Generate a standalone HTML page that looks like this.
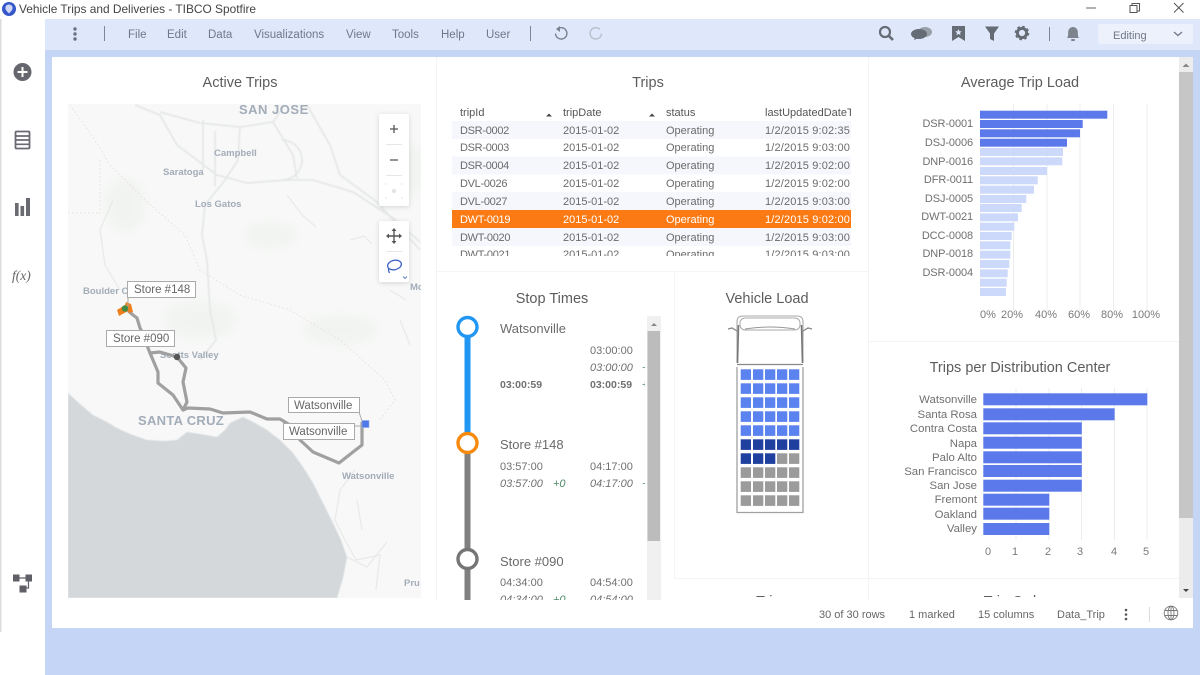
<!DOCTYPE html>
<html><head><meta charset="utf-8"><title>Vehicle Trips and Deliveries</title>
<style>
html,body{margin:0;padding:0;width:1200px;height:675px;overflow:hidden;background:#fff}
svg{display:block;filter:blur(.35px)}
text{font-family:"Liberation Sans",sans-serif;fill:#6b6b6b;font-size:11px}
.tb{font-size:11.5px;fill:#6f7888}
.ti{font-size:14.5px;fill:#5c5c5c;text-anchor:middle}
.h{fill:#555}
.lu{letter-spacing:.15px}
.lb{text-anchor:end;font-size:11px;letter-spacing:-.1px;fill:#707070}
.lc{text-anchor:end;font-size:11.4px;fill:#707070}
.tk{text-anchor:middle;font-size:11px;fill:#7a7a7a}
.ml{font-size:11.5px;fill:#666}
.mp{font-weight:bold;fill:#a3acb9;font-size:9.5px}
.st{font-size:11px;fill:#707070}
.it{font-style:italic}
.g{fill:#4f8a68;font-style:italic}
.w{fill:#fff}
</style></head><body>
<svg width="1200" height="675" viewBox="0 0 1200 675" xmlns="http://www.w3.org/2000/svg">
<defs>
<clipPath id="cm"><rect x="68" y="104" width="353" height="494"/></clipPath>
<clipPath id="ct"><rect x="452" y="104" width="399" height="152"/></clipPath>
<clipPath id="cs"><rect x="445" y="312" width="200" height="288"/></clipPath>
<clipPath id="cb"><rect x="680" y="580" width="490" height="17"/></clipPath>
<filter id="b1"><feGaussianBlur stdDeviation="0.45"/></filter>
<filter id="b3" x="-50%" y="-50%" width="200%" height="200%"><feGaussianBlur stdDeviation="5"/></filter>
<filter id="sh" x="-30%" y="-30%" width="160%" height="160%"><feDropShadow dx="0" dy="1" stdDeviation="2.5" flood-color="#000" flood-opacity=".14"/></filter>
</defs>

<!-- base -->
<rect width="1200" height="19" fill="#fff"/>
<rect x="45" y="19" width="1155" height="656" fill="#c5d5f6"/>
<rect x="45" y="19" width="1155" height="31" fill="#dfe8fb"/>
<rect x="0" y="19" width="45" height="656" fill="#fff"/>
<rect x="0" y="19" width="1.5" height="613" fill="#dcdcdc"/>
<rect x="52" y="57" width="1141" height="571" fill="#fff" rx="1"/>

<!-- title bar -->
<circle cx="9" cy="9" r="7" fill="#3557c9"/>
<path d="M9 4.5c-2.2 0-3.600 1.600-3.600 3.500 0 2.300 2.300 4 3.600 5.500 1.300-1.500 3.600-3.200 3.600-5.500 0-1.900-1.400-3.500-3.600-3.500z" fill="#cfd6f6"/>
<text x="19" y="13" style="font-size:11.9px;fill:#444">Vehicle Trips and Deliveries - TIBCO Spotfire</text>
<path d="M1086 8h10" stroke="#666" stroke-width="1"/>
<rect x="1130" y="5.500" width="7" height="7" fill="#fff" stroke="#555"/>
<path d="M1132 5.500v-2h7.500v7.500h-2.500" fill="none" stroke="#555"/>
<path d="M1174 3l9.500 9.500M1183.500 3l-9.500 9.500" stroke="#555" stroke-width="1"/>

<!-- toolbar -->
<circle cx="75" cy="29" r="1.700" fill="#6a7280"/><circle cx="75" cy="34" r="1.700" fill="#6a7280"/><circle cx="75" cy="39" r="1.700" fill="#6a7280"/>
<path d="M104.500 26v15M530.500 26v15M1049.500 27v14" stroke="#7d8694" stroke-width="1"/>
<text class="tb" x="128" y="38">File</text>
<text class="tb" x="167" y="38">Edit</text>
<text class="tb" x="208" y="38">Data</text>
<text class="tb" x="254" y="38">Visualizations</text>
<text class="tb" x="346" y="38">View</text>
<text class="tb" x="392" y="38">Tools</text>
<text class="tb" x="441" y="38">Help</text>
<text class="tb" x="486" y="38">User</text>
<path d="M557 29.500a5.700 5.700 0 1 1-1.500 4" fill="none" stroke="#7a828e" stroke-width="1.400"/><path d="M560 26v6l-4-3z" fill="#7a828e"/>
<path d="M602 29.500a5.700 5.700 0 1 0 1.500 4" fill="none" stroke="#b8bfca" stroke-width="1.400" transform="translate(-2 0)"/>
<circle cx="885" cy="32" r="5" fill="none" stroke="#666c75" stroke-width="2.200"/><path d="M889 36l4 4" stroke="#666c75" stroke-width="2.600"/>
<ellipse cx="925" cy="32" rx="7" ry="5" fill="#9aa0aa"/><ellipse cx="919" cy="34" rx="8" ry="5" fill="#666c75"/><path d="M915 37l-1 3 5-2z" fill="#666c75"/>
<path d="M952 26h13v15l-6.500-4-6.500 4z" fill="#666c75"/><path d="M958.500 29l1 2.200 2.300.2-1.800 1.500.6 2.300-2.100-1.300-2.100 1.300.6-2.300-1.800-1.500 2.300-.2z" fill="#dfe8fb"/>
<path d="M985 26.500h14l-5 7v7.500l-4-2v-5.500z" fill="#666c75"/>
<circle cx="1022" cy="33" r="4.600" fill="none" stroke="#666c75" stroke-width="3"/><circle cx="1022" cy="33" r="6.300" fill="none" stroke="#666c75" stroke-width="2" stroke-dasharray="2.500 2.450"/>
<path d="M1067 38c1.500-2 1-4 1.200-6.500.2-2.500 2.300-4.500 4.800-4.500s4.600 2 4.800 4.500c.2 2.500-.3 4.500 1.200 6.500z" fill="#7d848e"/><rect x="1071" y="39" width="4" height="2" rx="1" fill="#7d848e"/>
<rect x="1098" y="24" width="95" height="20" rx="2" fill="#ecf1fc"/>
<text class="tb" x="1113" y="39" style="font-size:11px">Editing</text>
<path d="M1174 32l4 3.500 4-3.500" fill="none" stroke="#6f7888" stroke-width="1.300"/>

<!-- sidebar -->
<circle cx="22.500" cy="72" r="9" fill="#66666e"/><path d="M22.500 67v10M17.500 72h10" stroke="#fff" stroke-width="2"/>
<rect x="15.500" y="131.500" width="14" height="17" rx="1" fill="none" stroke="#6a6a72" stroke-width="1.800"/>
<path d="M15.500 136h14M15.500 140h14M15.500 144.300h14" stroke="#6a6a72" stroke-width="1.700"/>
<rect x="15" y="203" width="3.600" height="13" fill="#6a6a72"/><rect x="20.500" y="206" width="3.600" height="10" fill="#6a6a72"/><rect x="26" y="198" width="4" height="18" fill="#6a6a72"/>
<text x="12" y="280" style="font-family:'Liberation Serif',serif;font-style:italic;font-size:13.500px;fill:#666">f(x)</text>
<rect x="13" y="574.500" width="6.500" height="7" fill="#5f5f68"/><rect x="25.500" y="574.500" width="6.500" height="7" fill="#5f5f68"/><rect x="19.500" y="585.500" width="7" height="7" fill="#5f5f68"/>
<path d="M19.500 578h6M28.500 581.500v6.500h-2" fill="none" stroke="#5f5f68" stroke-width="1.200"/>

<!-- panel dividers -->
<path d="M436.500 57v543M868.500 57v543M436 271.500h432M674.500 272v306M674 578.500h505M868 341.500h311" stroke="#f4f4f4" stroke-width="1"/>

<!-- titles -->
<text class="ti" x="240" y="87">Active Trips</text>
<text class="ti" x="648" y="87">Trips</text>
<text class="ti" x="1020" y="87">Average Trip Load</text>
<text class="ti" x="552" y="303">Stop Times</text>
<text class="ti" x="767" y="303">Vehicle Load</text>
<text class="ti" x="1020" y="372">Trips per Distribution Center</text>
<g clip-path="url(#cb)"><text class="ti" x="1020" y="606">Trip Orders</text><text class="ti" x="772" y="606">Trips</text></g>

<!-- map -->
<g clip-path="url(#cm)">
<rect x="68" y="104" width="353" height="494" fill="#f7f8f7"/>
<g filter="url(#b3)" fill="#eff2ef" opacity=".75">
<ellipse cx="125" cy="205" rx="20" ry="26"/>
<ellipse cx="270" cy="235" rx="26" ry="12"/><ellipse cx="340" cy="330" rx="36" ry="14"/>
<ellipse cx="200" cy="320" rx="36" ry="18"/>
<ellipse cx="410" cy="170" rx="14" ry="26"/>
</g>
<path d="M68 393L80 404 93 415 105 421 117 428 130 434 147 440 165 441 177 440 187 432 200 434 217 437 225 430 230 423 243 417 255 423 267 430 280 440 293 453 303 467 313 483 323 503 333 523 341 540 347 557 343 578 337 598H68z" fill="#d4d8db" filter="url(#b1)"/>
<g fill="none" stroke="#e6e8e8" stroke-width="1.800" filter="url(#b1)">
<path d="M135 105L160 115 177 145 217 175 247 183 287 180 313 180 353 192 393 218 420 242"/>
<path d="M160 112L200 123 240 127 273 122 285 105"/>
<path d="M273 122L293 155 297 178"/>
<path d="M307 105L330 145 340 175 377 202 420 250"/>
<path d="M240 127L238 160 225 180 205 205 202 235 207 260 210 310 216 340 200 360"/>
<path d="M215 131v55M203 120v50M282 140a20 20 0 1 1 0 40"/>
</g>
<g fill="none" stroke="#e8e9e8" stroke-width="1.200">
<path d="M113 200L100 230 105 265 120 290M287 195l15 20 14 12M350 240l14-4 8 8M390 290l16 10M400 320l10 25"/>
<path d="M355 470L340 490 335 520 345 540 356 560 380 555 376 590M357 500l5 30M347 557l20 10 20-25"/>
</g>
<g fill="none" stroke="#ecdfdc" stroke-width="1" stroke-dasharray="1.500 2.500">
<path d="M70 105L95 140 110 165 145 200 185 235 200 270 240 295 290 310 340 340 385 380 395 400 380 420M68 213h32M100 160v55"/>
</g>
<text class="mp" x="239" y="114" style="font-size:13px;letter-spacing:.5px">SAN JOSE</text>
<text class="mp" x="214" y="156">Campbell</text>
<text class="mp" x="163" y="175">Saratoga</text>
<text class="mp" x="195" y="207">Los Gatos</text>
<text class="mp" x="83" y="294">Boulder C</text>
<text class="mp" x="160" y="358">Scotts Valley</text>
<text class="mp" x="138" y="425" style="font-size:13px;letter-spacing:.3px">SANTA CRUZ</text>
<text class="mp" x="342" y="479">Watsonville</text>
<text class="mp" x="404" y="586">Pru</text>
<text class="mp" x="410" y="290">Mo</text>
<g fill="none" stroke="#a0a0a0" stroke-width="3.200" stroke-linejoin="round" stroke-linecap="round">
<path d="M125 308L133 315 137 318 140 328 145 338 148 348 150 353 158 372 158 383 173 395 183 410 188 408 210 409 223 413 250 412 267 419 280 419 290 425 300 440 313 452 339 463 353 452 362 445 362 423"/>
<path d="M150 353L160 352 177 357 186 368 183 382 187 402 183 410"/>
</g>
<rect x="362" y="420.500" width="7" height="7" fill="#4f78e8" stroke="#8ea9ee" stroke-width=".6"/>
<circle cx="177" cy="357" r="3.200" fill="#555"/>
<path d="M117 310l8-5 1-3 5 2 2 8-4 1-1-2-9 5z" fill="#ee7f1e"/><circle cx="125" cy="308.500" r="3.200" fill="#3f8a46"/>
<g fill="#fff" stroke="#aaa" stroke-width="1">
<rect x="127.500" y="281.500" width="68" height="16"/>
<rect x="106.500" y="330.500" width="68" height="16"/>
<rect x="288.500" y="397.500" width="71" height="15"/>
<rect x="283.500" y="423.500" width="71" height="16"/>
</g>
<path d="M128 297v10M359 412l3 9M355 426h7" stroke="#aaa" fill="none"/>
<text class="ml" x="134" y="293">Store #148</text>
<text class="ml" x="113" y="342">Store #090</text>
<text class="ml" x="294" y="409">Watsonville</text>
<text class="ml" x="289" y="435">Watsonville</text>
<rect x="379" y="114" width="30" height="92" rx="2" fill="#fff" filter="url(#sh)"/>
<rect x="379" y="221" width="30" height="61" rx="2" fill="#fff" filter="url(#sh)"/>
<path d="M390 129h8M394 125v8M390 160h8" stroke="#555" stroke-width="1.300"/>
<path d="M386 144.500h16M386 175.500h16M386 251.500h16" stroke="#e6e6e6"/>
<circle cx="394" cy="191" r="2.200" fill="#e4e4e4"/>
<g fill="#eee"><circle cx="386" cy="184" r="1"/><circle cx="402" cy="184" r="1"/><circle cx="386" cy="198" r="1"/><circle cx="402" cy="198" r="1"/></g>
<path d="M394 229v14M387 236h14" stroke="#555" stroke-width="1.400"/>
<path d="M394 228l-2.500 3h5zM394 244l-2.500-3h5zM386 236l3-2.500v5zM402 236l-3-2.500v5z" fill="#555"/>
<ellipse cx="394.500" cy="265" rx="7" ry="4.700" transform="rotate(-12 394.500 265)" fill="none" stroke="#3f63c9" stroke-width="1.300"/>
<path d="M389 268c-1 1.500-.5 3 .5 5" fill="none" stroke="#3f63c9" stroke-width="1.300"/>
<path d="M403 276.500l2 2 2-2" fill="none" stroke="#5a76c4" stroke-width=".9"/>
</g>

<!-- table -->
<g clip-path="url(#ct)">
<rect x="452" y="121" width="399" height="18" fill="#f5f7fc"/>
<rect x="452" y="156.500" width="399" height="18" fill="#f5f7fc"/>
<rect x="452" y="192" width="399" height="18" fill="#f5f7fc"/>
<rect x="452" y="228" width="399" height="18" fill="#f5f7fc"/>
<rect x="452" y="210" width="399" height="18" fill="#fb7a14"/>
<text class="h" x="460" y="116">tripId</text><text class="h" x="563" y="116">tripDate</text><text class="h" x="666" y="116">status</text><text class="h" x="765" y="116">lastUpdatedDateTime</text>
<path d="M546 116.500l3-3 3 3zM649 116.500l3-3 3 3z" fill="#444"/>
<g style="letter-spacing:-.3px">
<text x="460" y="134">DSR-0002</text><text x="460" y="151">DSR-0003</text><text x="460" y="169">DSR-0004</text><text x="460" y="187">DVL-0026</text><text x="460" y="205">DVL-0027</text><text class="w" x="460" y="223">DWT-0019</text><text x="460" y="241">DWT-0020</text><text x="460" y="258">DWT-0021</text>
</g>
<text x="563" y="134">2015-01-02</text><text x="563" y="151">2015-01-02</text><text x="563" y="169">2015-01-02</text><text x="563" y="187">2015-01-02</text><text x="563" y="205">2015-01-02</text><text class="w" x="563" y="223">2015-01-02</text><text x="563" y="241">2015-01-02</text><text x="563" y="258">2015-01-02</text>
<text x="666" y="134">Operating</text><text x="666" y="151">Operating</text><text x="666" y="169">Operating</text><text x="666" y="187">Operating</text><text x="666" y="205">Operating</text><text class="w" x="666" y="223">Operating</text><text x="666" y="241">Operating</text><text x="666" y="258">Operating</text>
<g class="lu"><text class="lu" x="765" y="134">1/2/2015 9:02:35 AM</text><text class="lu" x="765" y="151">1/2/2015 9:03:00 AM</text><text class="lu" x="765" y="169">1/2/2015 9:02:00 AM</text><text class="lu" x="765" y="187">1/2/2015 9:02:00 AM</text><text class="lu" x="765" y="205">1/2/2015 9:03:00 AM</text><text class="w lu" x="765" y="223">1/2/2015 9:02:00 AM</text><text class="lu" x="765" y="241">1/2/2015 9:03:00 AM</text><text class="lu" x="765" y="258">1/2/2015 9:03:00 AM</text></g>
</g>

<!-- stop times -->
<g clip-path="url(#cs)">
<rect x="464.500" y="335" width="6" height="100" fill="#2196f3"/>
<rect x="464.500" y="452" width="6" height="150" fill="#808080"/>
<circle cx="467.500" cy="327" r="9.500" fill="#fff" stroke="#2196f3" stroke-width="3.400"/>
<circle cx="467.500" cy="443" r="9.500" fill="#fff" stroke="#f58a0f" stroke-width="3.400"/>
<circle cx="467.500" cy="559" r="9.500" fill="#fff" stroke="#757575" stroke-width="3.400"/>
<text x="500" y="333" style="font-size:13px;fill:#6a6a6a">Watsonville</text>
<text class="st" x="590" y="354">03:00:00</text>
<text class="st it" x="590" y="371">03:00:00</text><text class="g" x="642" y="371">+0</text>
<text class="st" x="500" y="388" style="font-weight:bold;font-size:10.500px">03:00:59</text>
<text class="st" x="590" y="388" style="font-weight:bold;font-size:10.500px">03:00:59</text><text class="g" x="642" y="388" style="font-style:normal">+0</text>
<text x="500" y="449" style="font-size:13px;fill:#6a6a6a">Store #148</text>
<text class="st" x="500" y="470">03:57:00</text><text class="st" x="590" y="470">04:17:00</text>
<text class="st it" x="500" y="487">03:57:00</text><text class="g" x="553" y="487">+0</text><text class="st it" x="590" y="487">04:17:00</text><text class="g" x="642" y="487">+0</text>
<text x="500" y="566" style="font-size:13px;fill:#6a6a6a">Store #090</text>
<text class="st" x="500" y="586">04:34:00</text><text class="st" x="590" y="586">04:54:00</text>
<text class="st it" x="500" y="603">04:34:00</text><text class="g" x="553" y="603">+0</text><text class="st it" x="590" y="603">04:54:00</text>
</g>
<rect x="647" y="316" width="14" height="284" fill="#f0f0f0"/>
<rect x="647.500" y="331" width="12.500" height="210" fill="#bcbcbc"/>
<path d="M651 326l3-3 3 3z" fill="#888"/>

<!-- vehicle load -->
<g fill="none" stroke="#8a8a8a">
<path d="M737 363V322q0-6 6-6h54q6 0 6 6v41" stroke-width="1.100" stroke="#aaa"/>
<path d="M737.500 363l1-38M802.500 363l-1-38" stroke-width="1.600" stroke="#777"/>
<rect x="740" y="318" width="60" height="12" rx="5" stroke-width="1" stroke="#aaa"/>
<path d="M745 329q25-4 50 0" stroke-width="1" stroke="#999"/>
<path d="M737 331l-5-3-4 1M803 331l5-3 4 1" stroke-width="1.300" stroke="#888"/>
<path d="M737 364.500h66" stroke-width="1.300" stroke="#888"/>
<path d="M737 367v145.500h66V367" stroke-width="1.300" stroke="#a0a0a0"/>
</g>
<g fill="#5b83f0">
<rect x="740.700" y="369.300" width="10.300" height="10.600"/><rect x="753" y="369.300" width="10.300" height="10.600"/><rect x="765" y="369.300" width="10.300" height="10.600"/><rect x="777" y="369.300" width="10.300" height="10.600"/><rect x="789" y="369.300" width="10.300" height="10.600"/>
<rect x="740.700" y="383.300" width="10.300" height="10.600"/><rect x="753" y="383.300" width="10.300" height="10.600"/><rect x="765" y="383.300" width="10.300" height="10.600"/><rect x="777" y="383.300" width="10.300" height="10.600"/><rect x="789" y="383.300" width="10.300" height="10.600"/>
<rect x="740.700" y="397.300" width="10.300" height="10.600"/><rect x="753" y="397.300" width="10.300" height="10.600"/><rect x="765" y="397.300" width="10.300" height="10.600"/><rect x="777" y="397.300" width="10.300" height="10.600"/><rect x="789" y="397.300" width="10.300" height="10.600"/>
<rect x="740.700" y="411.300" width="10.300" height="10.600"/><rect x="753" y="411.300" width="10.300" height="10.600"/><rect x="765" y="411.300" width="10.300" height="10.600"/><rect x="777" y="411.300" width="10.300" height="10.600"/><rect x="789" y="411.300" width="10.300" height="10.600"/>
<rect x="740.700" y="425.300" width="10.300" height="10.600"/><rect x="753" y="425.300" width="10.300" height="10.600"/><rect x="765" y="425.300" width="10.300" height="10.600"/><rect x="777" y="425.300" width="10.300" height="10.600"/><rect x="789" y="425.300" width="10.300" height="10.600"/>
</g>
<g fill="#20409f">
<rect x="740.700" y="439.300" width="10.300" height="10.600"/><rect x="753" y="439.300" width="10.300" height="10.600"/><rect x="765" y="439.300" width="10.300" height="10.600"/><rect x="777" y="439.300" width="10.300" height="10.600"/><rect x="789" y="439.300" width="10.300" height="10.600"/>
<rect x="740.700" y="453.300" width="10.300" height="10.600"/><rect x="753" y="453.300" width="10.300" height="10.600"/><rect x="765" y="453.300" width="10.300" height="10.600"/>
</g>
<g fill="#9b9b9b">
<rect x="777" y="453.300" width="10.300" height="10.600"/><rect x="789" y="453.300" width="10.300" height="10.600"/>
<rect x="740.700" y="467.300" width="10.300" height="10.600"/><rect x="753" y="467.300" width="10.300" height="10.600"/><rect x="765" y="467.300" width="10.300" height="10.600"/><rect x="777" y="467.300" width="10.300" height="10.600"/><rect x="789" y="467.300" width="10.300" height="10.600"/>
<rect x="740.700" y="481.300" width="10.300" height="10.600"/><rect x="753" y="481.300" width="10.300" height="10.600"/><rect x="765" y="481.300" width="10.300" height="10.600"/><rect x="777" y="481.300" width="10.300" height="10.600"/><rect x="789" y="481.300" width="10.300" height="10.600"/>
<rect x="740.700" y="495.300" width="10.300" height="10.600"/><rect x="753" y="495.300" width="10.300" height="10.600"/><rect x="765" y="495.300" width="10.300" height="10.600"/><rect x="777" y="495.300" width="10.300" height="10.600"/><rect x="789" y="495.300" width="10.300" height="10.600"/>
</g>

<!-- average trip load chart -->
<path d="M1013.500 104v206M1047 104v206M1080 104v206M1113.500 104v206M1147 104v206" stroke="#ececec"/>
<g fill="#5b79ea">
<rect x="980" y="110.700" width="127.300" height="8"/><rect x="980" y="120" width="102.700" height="8"/><rect x="980" y="129.300" width="100" height="8"/><rect x="980" y="138.700" width="87" height="8"/>
</g>
<g fill="#cdd9fb">
<rect x="980" y="148" width="83" height="8"/><rect x="980" y="157.300" width="82.300" height="8"/><rect x="980" y="167" width="67" height="8"/><rect x="980" y="176.300" width="57.700" height="8"/><rect x="980" y="185.700" width="54" height="8"/><rect x="980" y="195" width="46.300" height="8"/><rect x="980" y="204" width="41.700" height="8"/><rect x="980" y="213.300" width="38" height="8"/><rect x="980" y="222.700" width="34.300" height="8"/><rect x="980" y="232" width="31.700" height="8"/><rect x="980" y="241.300" width="30.300" height="8"/><rect x="980" y="250.700" width="30.300" height="8"/><rect x="980" y="260" width="29.300" height="8"/><rect x="980" y="269.300" width="27.700" height="8"/><rect x="980" y="278.700" width="26.700" height="8"/><rect x="980" y="288" width="26" height="8"/>
</g>
<text class="lb" x="973" y="127">DSR-0001</text>
<text class="lb" x="973" y="146">DSJ-0006</text>
<text class="lb" x="973" y="165">DNP-0016</text>
<text class="lb" x="973" y="183">DFR-0011</text>
<text class="lb" x="973" y="202">DSJ-0005</text>
<text class="lb" x="973" y="220">DWT-0021</text>
<text class="lb" x="973" y="239">DCC-0008</text>
<text class="lb" x="973" y="257">DNP-0018</text>
<text class="lb" x="973" y="276">DSR-0004</text>
<text class="tk" x="988" y="318">0%</text><text class="tk" x="1012" y="318">20%</text><text class="tk" x="1046" y="318">40%</text><text class="tk" x="1079" y="318">60%</text><text class="tk" x="1112" y="318">80%</text><text class="tk" x="1146" y="318">100%</text>

<!-- distribution chart -->
<path d="M1016 388v152M1049 388v152M1081.500 388v152M1114.500 388v152M1147 388v152" stroke="#ececec"/>
<g fill="#5b79ea">
<rect x="983.300" y="393.300" width="164" height="12"/><rect x="983.300" y="408.300" width="131.300" height="12"/><rect x="983.300" y="422.300" width="98.500" height="12"/><rect x="983.300" y="436.700" width="98.500" height="12"/><rect x="983.300" y="451.300" width="98.500" height="12"/><rect x="983.300" y="465" width="98.500" height="12"/><rect x="983.300" y="479.700" width="98.500" height="12"/><rect x="983.300" y="493.700" width="66" height="12"/><rect x="983.300" y="507.700" width="66" height="12"/><rect x="983.300" y="523" width="66" height="12"/>
</g>
<text class="lc" x="977" y="403">Watsonville</text>
<text class="lc" x="977" y="418">Santa Rosa</text>
<text class="lc" x="977" y="432">Contra Costa</text>
<text class="lc" x="977" y="447">Napa</text>
<text class="lc" x="977" y="461">Palo Alto</text>
<text class="lc" x="977" y="475">San Francisco</text>
<text class="lc" x="977" y="489">San Jose</text>
<text class="lc" x="977" y="503">Fremont</text>
<text class="lc" x="977" y="518">Oakland</text>
<text class="lc" x="977" y="532">Valley</text>
<text class="tk" x="988" y="555">0</text><text class="tk" x="1015" y="555">1</text><text class="tk" x="1048" y="555">2</text><text class="tk" x="1080" y="555">3</text><text class="tk" x="1114" y="555">4</text><text class="tk" x="1146" y="555">5</text>

<!-- right scrollbar -->
<rect x="1179" y="57" width="14" height="541" fill="#ececec"/>
<rect x="1179" y="72" width="14" height="446" fill="#c6c6c6"/>
<path d="M1182.500 67l3.500-3.500 3.500 3.500z" fill="#888"/>
<path d="M1183 589l3 3 3-3z" fill="#444"/>

<!-- status bar -->
<text x="819" y="618" style="fill:#666">30 of 30 rows</text>
<text x="909" y="618" style="fill:#666">1 marked</text>
<text x="978" y="618" style="fill:#666">15 columns</text>
<text x="1057" y="618" style="fill:#666">Data_Trip</text>
<circle cx="1126" cy="610" r="1.300" fill="#555"/><circle cx="1126" cy="614.500" r="1.300" fill="#555"/><circle cx="1126" cy="619" r="1.300" fill="#555"/>
<path d="M1149.500 607v15" stroke="#ddd"/>
<g fill="none" stroke="#777" stroke-width=".9">
<circle cx="1171" cy="613" r="6.800"/><ellipse cx="1171" cy="613" rx="3" ry="6.800"/><path d="M1164.500 610.500h13M1164.500 615.500h13M1171 606v14"/>
</g>
</svg>
</body></html>
